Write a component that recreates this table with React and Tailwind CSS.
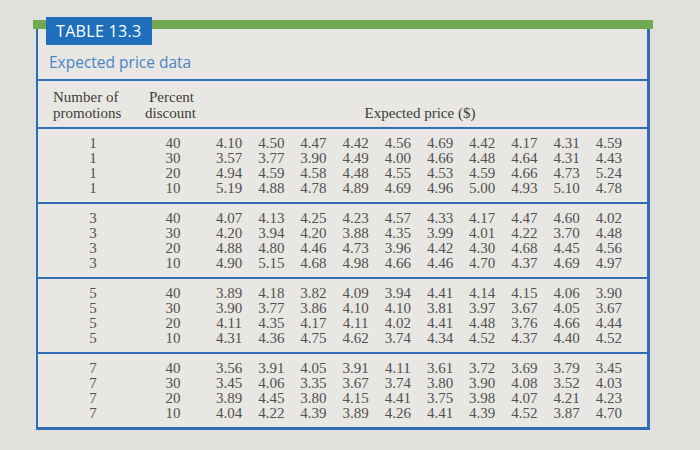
const groups = [
  {
    n: 1,
    rows: [
      [40, ["4.10", "4.50", "4.47", "4.42", "4.56", "4.69", "4.42", "4.17", "4.31", "4.59"]],
      [30, ["3.57", "3.77", "3.90", "4.49", "4.00", "4.66", "4.48", "4.64", "4.31", "4.43"]],
      [20, ["4.94", "4.59", "4.58", "4.48", "4.55", "4.53", "4.59", "4.66", "4.73", "5.24"]],
      [10, ["5.19", "4.88", "4.78", "4.89", "4.69", "4.96", "5.00", "4.93", "5.10", "4.78"]],
    ],
  },
  {
    n: 3,
    rows: [
      [40, ["4.07", "4.13", "4.25", "4.23", "4.57", "4.33", "4.17", "4.47", "4.60", "4.02"]],
      [30, ["4.20", "3.94", "4.20", "3.88", "4.35", "3.99", "4.01", "4.22", "3.70", "4.48"]],
      [20, ["4.88", "4.80", "4.46", "4.73", "3.96", "4.42", "4.30", "4.68", "4.45", "4.56"]],
      [10, ["4.90", "5.15", "4.68", "4.98", "4.66", "4.46", "4.70", "4.37", "4.69", "4.97"]],
    ],
  },
  {
    n: 5,
    rows: [
      [40, ["3.89", "4.18", "3.82", "4.09", "3.94", "4.41", "4.14", "4.15", "4.06", "3.90"]],
      [30, ["3.90", "3.77", "3.86", "4.10", "4.10", "3.81", "3.97", "3.67", "4.05", "3.67"]],
      [20, ["4.11", "4.35", "4.17", "4.11", "4.02", "4.41", "4.48", "3.76", "4.66", "4.44"]],
      [10, ["4.31", "4.36", "4.75", "4.62", "3.74", "4.34", "4.52", "4.37", "4.40", "4.52"]],
    ],
  },
  {
    n: 7,
    rows: [
      [40, ["3.56", "3.91", "4.05", "3.91", "4.11", "3.61", "3.72", "3.69", "3.79", "3.45"]],
      [30, ["3.45", "4.06", "3.35", "3.67", "3.74", "3.80", "3.90", "4.08", "3.52", "4.03"]],
      [20, ["3.89", "4.45", "3.80", "4.15", "4.41", "3.75", "3.98", "4.07", "4.21", "4.23"]],
      [10, ["4.04", "4.22", "4.39", "3.89", "4.26", "4.41", "4.39", "4.52", "3.87", "4.70"]],
    ],
  },
];

function Group({ group, last }) {
  return (
    <div className={"pt-[7px] pb-[6px] " + (last ? "" : "border-b-2 border-[#2f6db4]")}>
      {group.rows.map(([pct, prices], i) => (
        <div key={i} className="flex h-[15px] items-center leading-[15px]">
          <div className="w-[110px] text-center">{group.n}</div>
          <div className="w-[50px] text-center">{pct}</div>
          <div className="w-[10px]" />
          {prices.map((p, j) => (
            <div key={j} className="w-[42.2px] text-center">
              {p}
            </div>
          ))}
        </div>
      ))}
    </div>
  );
}

export default function App() {
  return (
    <div className="w-[700px] h-[450px] bg-[#e1e0dc] pt-[20px] overflow-hidden">
      <div className="relative ml-[36px] w-[614px]">
        {/* green top bar */}
        <div className="h-[9px] bg-[#72a852] -mx-[3px]" />

        {/* label tab */}
        <div
          className="absolute left-[10px] -top-[3px] h-[28px] px-[10px] flex items-center bg-[#1f6fbc] text-white text-[16px] font-medium tracking-[0.02em]"
          style={{ fontFamily: '"Open Sans", sans-serif' }}
        >
          TABLE 13.3
        </div>

        <div className="border-l-2 border-r-[3px] border-b-[3px] border-[#2f6db4] bg-[#e8e7e3]">
          <div
            className="h-[52px] border-b-2 border-[#2f6db4] pl-[11px] pt-[23px] text-[15.5px] leading-[20px] text-[#4a86c2]"
            style={{ fontFamily: '"Open Sans", sans-serif' }}
          >
            Expected price data
          </div>

          <div
            className="text-[15px] text-[#505050]"
            style={{ fontFamily: '"Liberation Serif", "Times New Roman", serif' }}
          >
            <div className="flex pt-[8px] pb-[6px] border-b-2 border-[#2f6db4] text-[#3c3c3a] leading-[16px]">
              <div className="w-[107px] pl-[15px]">
                Number of
                <br />
                promotions
              </div>
              <div className="w-[70px]">
                <span className="pl-[4px]">Percent</span>
                <br />
                discount
              </div>
              <div className="flex-1 flex items-end justify-center">
                <span className="ml-[-22px]">Expected price ($)</span>
              </div>
            </div>

            {groups.map((g, i) => (
              <Group key={g.n} group={g} last={i === groups.length - 1} />
            ))}
          </div>
        </div>
      </div>
    </div>
  );
}
